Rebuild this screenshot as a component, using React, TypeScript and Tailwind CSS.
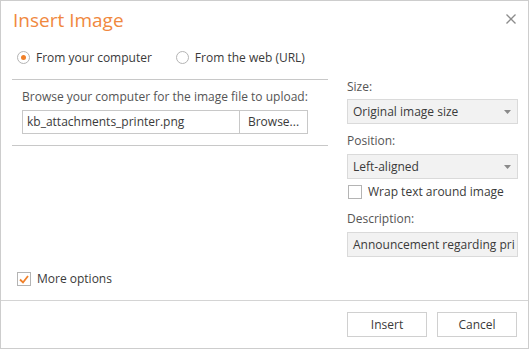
import React from 'react';

const Radio = ({ checked, label }: { checked?: boolean; label: string }) => (
  <label className="flex items-center gap-[6px]">
    <span className="w-[13px] h-[13px] rounded-full border border-[#b4b4b4] bg-white flex items-center justify-center">
      {checked && <span className="w-[5px] h-[5px] rounded-full bg-[#f0802a]" />}
    </span>
    <span className="text-[12px] leading-[18px] text-[#3a3a3a]">{label}</span>
  </label>
);

const Checkbox = ({ checked, label }: { checked?: boolean; label: string }) => (
  <label className="flex items-center gap-[6px]">
    <span className="w-[14px] h-[14px] border border-[#b4b4b4] bg-white flex items-center justify-center">
      {checked && (
        <svg width="10" height="9" viewBox="0 0 10 9">
          <path d="M1 4.5 L4 7.5 L9 1" fill="none" stroke="#f0802a" strokeWidth="1.8" />
        </svg>
      )}
    </span>
    <span className="text-[12px] leading-[18px] text-[#3a3a3a]">{label}</span>
  </label>
);

const Select = ({ value }: { value: string }) => (
  <div className="h-[25px] border border-[#dadada] bg-[#f2f2f2] flex items-center justify-between pl-[5px] pr-[6px]">
    <span className="text-[12px] text-[#3a3a3a]">{value}</span>
    <svg width="7" height="4" viewBox="0 0 7 4">
      <path d="M0 0 H7 L3.5 4 Z" fill="#8a8a8a" />
    </svg>
  </div>
);

export default function App() {
  return (
    <div
      className="w-[529px] h-[349px] border border-[#cdcdcd] bg-white flex flex-col"
      style={{ fontFamily: '"Open Sans", "Liberation Sans", sans-serif' }}
    >
      {/* Header */}
      <div className="h-[36px] flex items-center justify-between pl-[12px] pr-[11px]">
        <h1 className="text-[19px] leading-[24px] text-[#f0883e] mt-[1px]">Insert Image</h1>
        <button className="w-[12px] h-[12px] flex items-center justify-center">
          <svg width="10" height="10" viewBox="0 0 10 10">
            <path d="M0.5 0.5 L9.5 9.5 M9.5 0.5 L0.5 9.5" stroke="#8c8c8c" strokeWidth="1.3" />
          </svg>
        </button>
      </div>

      {/* Source */}
      <div className="h-[41px] flex items-center pl-[16px] gap-[24px]">
        <Radio checked label="From your computer" />
        <Radio label="From the web (URL)" />
      </div>

      {/* Body */}
      <div className="flex pl-[11px] gap-[19px]">
        <div className="w-[316px] h-[67px] mt-[1px] border-y border-[#c8c8c8] pl-[10px] pr-[20px] pt-[8px]">
          <div className="text-[12px] leading-[18px] text-[#555]">
            Browse your computer for the image file to upload:
          </div>
          <div className="mt-[4px] h-[24px] flex border border-[#c8c8c8]">
            <div className="flex-1 flex items-center pl-[4px] text-[12px] text-[#3a3a3a]">
              kb_attachments_printer.png
            </div>
            <button className="w-[68px] border-l border-[#c8c8c8] text-[12px] text-[#3a3a3a]">Browse...</button>
          </div>
        </div>

        <div className="w-[171px] flex flex-col">
          <div className="text-[12px] leading-[18px] text-[#555]">Size:</div>
          <div className="mt-[3px]">
            <Select value="Original image size" />
          </div>
          <div className="mt-[8px] text-[12px] leading-[18px] text-[#555]">Position:</div>
          <div className="mt-[4px]">
            <Select value="Left-aligned" />
          </div>
          <div className="mt-[4px] pl-[1px]">
            <Checkbox label="Wrap text around image" />
          </div>
          <div className="mt-[9px] text-[12px] leading-[18px] text-[#555]">Description:</div>
          <div className="mt-[4px] h-[25px] border border-[#dadada] bg-[#f2f2f2] flex items-center pl-[5px] whitespace-nowrap">
            <span className="text-[12px] text-[#3a3a3a]">Announcement regarding pri</span>
          </div>
        </div>
      </div>

      {/* More options */}
      <div className="mt-[13px] pl-[16px]">
        <Checkbox checked label="More options" />
      </div>

      {/* Footer */}
      <div className="mt-auto h-[48px] border-t border-[#d4d4d4] flex items-center justify-end gap-[10px] pr-[11px]">
        <button className="w-[80px] h-[25px] border border-[#d0d0d0] bg-white text-[12px] text-[#3a3a3a]">Insert</button>
        <button className="w-[80px] h-[25px] border border-[#d0d0d0] bg-white text-[12px] text-[#3a3a3a]">Cancel</button>
      </div>
    </div>
  );
}
